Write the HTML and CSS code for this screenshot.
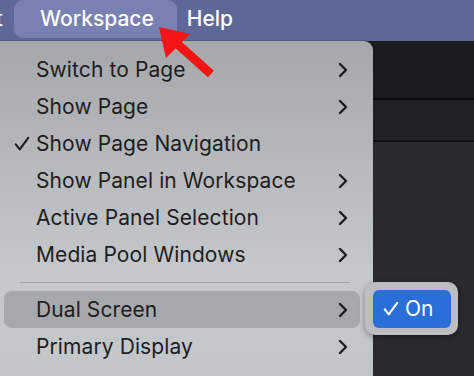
FILE: index.html
```html
<!DOCTYPE html>
<html lang="en">
<head>
    <meta charset="UTF-8">
    <title>Workspace Menu</title>
    <link rel="stylesheet" href="styles.css">
</head>
<body>
    <div class="screen">
        <header class="menubar">
            <span class="menubar-cut">t</span>
            <span class="menubar-item active">Workspace</span>
            <span class="menubar-item">Help</span>
        </header>

        <div class="workarea">
            <div class="band band-top"></div>
            <div class="band band-mid"></div>
            <div class="band band-low"></div>
        </div>

        <!-- dropdown sits over the workarea -->
        <div class="dropdown">
            <div class="menu-row"><span class="check"></span><span class="label">Switch to Page</span><svg class="chev" viewBox="0 0 10 16"><path d="M2 2l6 6-6 6"/></svg></div>
            <div class="menu-row"><span class="check"></span><span class="label">Show Page</span><svg class="chev" viewBox="0 0 10 16"><path d="M2 2l6 6-6 6"/></svg></div>
            <div class="menu-row"><span class="check"><svg class="tick" viewBox="0 0 18 18"><path d="M2 9.5l4.5 5.5L16 2"/></svg></span><span class="label">Show Page Navigation</span></div>
            <div class="menu-row"><span class="check"></span><span class="label">Show Panel in Workspace</span><svg class="chev" viewBox="0 0 10 16"><path d="M2 2l6 6-6 6"/></svg></div>
            <div class="menu-row"><span class="check"></span><span class="label">Active Panel Selection</span><svg class="chev" viewBox="0 0 10 16"><path d="M2 2l6 6-6 6"/></svg></div>
            <div class="menu-row"><span class="check"></span><span class="label">Media Pool Windows</span><svg class="chev" viewBox="0 0 10 16"><path d="M2 2l6 6-6 6"/></svg></div>
            <div class="menu-sep"></div>
            <div class="menu-row selected"><span class="check"></span><span class="label">Dual Screen</span><svg class="chev" viewBox="0 0 10 16"><path d="M2 2l6 6-6 6"/></svg></div>
            <div class="menu-row"><span class="check"></span><span class="label">Primary Display</span><svg class="chev" viewBox="0 0 10 16"><path d="M2 2l6 6-6 6"/></svg></div>
        </div>

        <div class="submenu">
            <div class="submenu-item"><svg class="tick tick-white" viewBox="0 0 18 18"><path d="M2 9.5l4.5 5.5L16 2"/></svg>On</div>
        </div>

        <svg class="pointer" viewBox="0 0 474 376" width="474" height="376">
            <line x1="211" y1="74" x2="174" y2="41" stroke="#f41414" stroke-width="9"/>
            <polygon points="159,27 190,34 166,58" fill="#f41414"/>
        </svg>
    </div>
</body>
</html>
```

FILE: styles.css
```css
* {
    margin: 0;
    padding: 0;
    box-sizing: border-box;
}

body {
    font-family: 'Inter', 'Liberation Sans', sans-serif;
    background: #1c1c1e;
}

.screen {
    position: relative;
    width: 474px;
    height: 376px;
    overflow: hidden;
}

.menubar {
    height: 41px;
    background: #5e6997;
    display: flex;
    align-items: center;
}

.menubar-cut {
    width: 14px;
    overflow: hidden;
    color: #fff;
    font-size: 21px;
    line-height: 38px;
    margin-top: -3px;
    text-indent: -4px;
    white-space: nowrap;
}

.menubar-item {
    color: #fff;
    font-size: 21px;
    font-weight: 500;
    height: 38px;
    line-height: 38px;
    margin-top: -3px;
    margin-left: 10px;
}

.menubar-item.active {
    background: #7881b2;
    margin-left: 0;
    padding: 0 23px 0 26px;
    border-radius: 9px;
}

.workarea {
    display: flex;
    flex-direction: column;
    height: 335px;
}

.band-top {
    height: 59px;
    background: #1c1c1e;
    border-bottom: 2px solid #0c0c0d;
}

.band-mid {
    height: 42px;
    background: #212124;
    border-bottom: 2px solid #101012;
}

.band-low {
    flex: 1;
    background: #2a2a2f;
}

.dropdown {
    position: absolute;
    top: 41px;
    left: -1px;
    width: 374px;
    height: 340px;
    padding: 10px 5px 0 5px;
    border-radius: 0 9px 0 0;
    background: linear-gradient(180deg, #a6a7ab 0%, #b6b8bc 35%, #c5c9cc 70%, #c3c6c9 100%);
    box-shadow: 0 0 0 1px rgba(0,0,0,0.15);
}

.menu-row {
    display: flex;
    align-items: center;
    height: 37px;
    color: #1d1d20;
    font-size: 21px;
    border-radius: 8px;
}

.menu-row .check {
    width: 32px;
    padding-left: 10px;
    display: flex;
    align-items: center;
}

.tick {
    width: 16px;
    height: 16px;
    fill: none;
    stroke: #1d1d20;
    stroke-width: 2.4;
    stroke-linecap: round;
    stroke-linejoin: round;
}

.tick-white {
    stroke: #fff;
    margin-right: 6px;
    vertical-align: -1px;
}

.menu-row .label {
    flex: 1;
    letter-spacing: 0.1px;
}

.chev {
    width: 10px;
    height: 16px;
    margin-right: 20px;
    fill: none;
    stroke: #1d1d20;
    stroke-width: 2.4;
    stroke-linecap: round;
    stroke-linejoin: round;
}

.menu-row.selected {
    background: #a6a8ab;
    margin-right: 8px;
}

.menu-row.selected .chev {
    margin-right: 12px;
}

.menu-sep {
    height: 18px;
    margin: 0 19px 0 16px;
    background: linear-gradient(#0000 8.5px, #a0a2a6 8.5px, #a0a2a6 9.5px, #0000 9.5px);
}

.submenu {
    position: absolute;
    top: 282px;
    left: 365px;
    width: 93px;
    height: 53px;
    padding: 8px 7px 7px 8px;
    background: #bcbec1;
    border-radius: 10px;
    box-shadow: 0 2px 6px rgba(0,0,0,0.35);
}

.submenu-item {
    height: 38px;
    background: #2a6fd8;
    border-radius: 6px;
    color: #fff;
    font-size: 21px;
    line-height: 38px;
    padding-left: 10px;
}

.pointer {
    position: absolute;
    top: 0;
    left: 0;
    pointer-events: none;
}
```
